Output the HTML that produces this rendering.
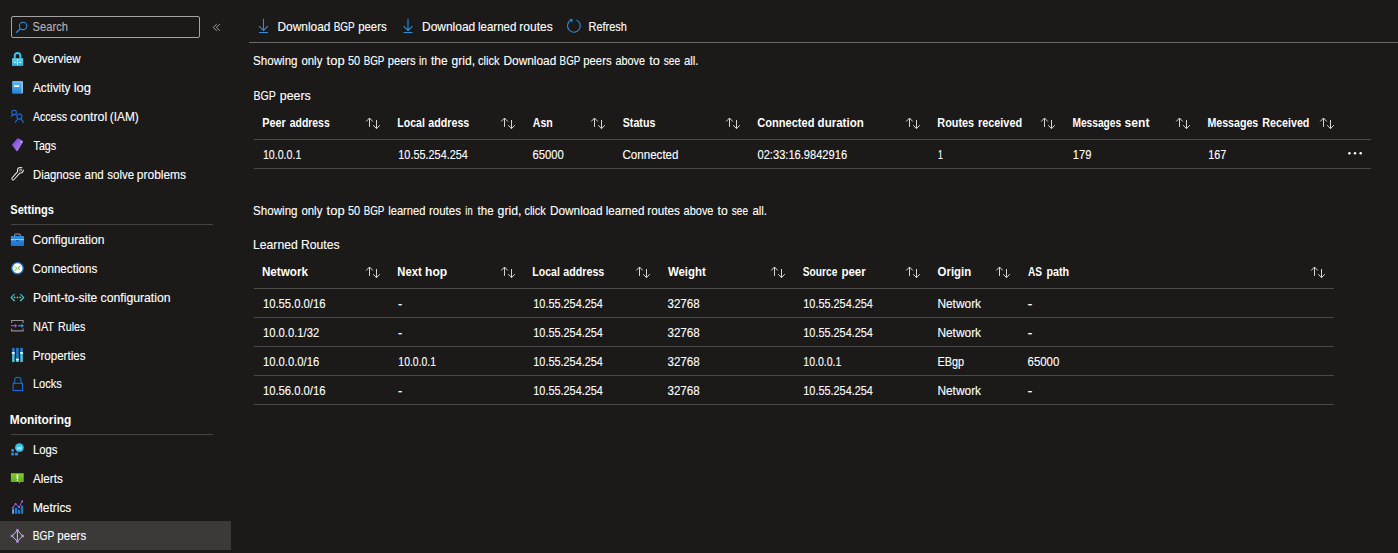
<!DOCTYPE html>
<html lang="en"><head><meta charset="utf-8"><title>BGP peers</title>
<style>
*{box-sizing:border-box;margin:0;padding:0}
html,body{width:1398px;height:553px;overflow:hidden;background:#1b1a19}
body{position:relative;font-family:"Liberation Sans",sans-serif;font-size:13px;color:#fff}
.t{position:absolute;white-space:nowrap;-webkit-text-stroke:0.12px currentColor;line-height:16px;height:16px;margin-top:1px;transform-origin:0 50%}
.b{font-weight:bold;-webkit-text-stroke:0}
.ln{position:absolute;height:1px}
.sel{position:absolute;left:0;top:521px;width:231px;height:29px;background:#3b3a39}
.search{position:absolute;left:11px;top:16px;width:189px;height:22px;border:1px solid #a6a4a2;border-radius:2px;background:#1b1a19}
.w,.g{position:static;display:contents}
.ov{position:absolute;left:0;top:0;width:1398px;height:553px;pointer-events:none}
</style></head><body>

<nav class="w" aria-label="Resource menu">
<div class="sel"></div>
<div class="search"></div>
<span class="t" id="s_search" style="left:32px;top:18px;color:#b3b1af;transform:translateX(0.62px) scaleX(0.8587)">Search</span>
<span class="t" id="s0" style="left:32px;top:50px;transform:translateX(0.91px) scaleX(0.881)">Overview</span>
<span class="g" id="s1"><span class="t" id="s1w0" style="left:32px;top:79px;transform:translateX(0.95px) scaleX(0.9079)">Activity</span> <span class="t" id="s1w1" style="left:73px;top:79px;transform:translateX(0.7px) scaleX(1.0)">log</span></span>
<span class="g" id="s2"><span class="t" id="s2w0" style="left:32px;top:108px;transform:translateX(0.95px) scaleX(0.8133)">Access</span> <span class="t" id="s2w1" style="left:70px;top:108px;transform:translateX(0.07px) scaleX(0.9524)">control</span> <span class="t" id="s2w2" style="left:109px;top:108px;transform:translateX(0.81px) scaleX(0.9125)">(IAM)</span></span>
<span class="t" id="s3" style="left:33px;top:137px;transform:translateX(0.59px) scaleX(0.8208)">Tags</span>
<span class="g" id="s4"><span class="t" id="s4w0" style="left:32px;top:166px;transform:translateX(0.98px) scaleX(0.8711)">Diagnose</span> <span class="t" id="s4w1" style="left:84px;top:166px;transform:translateX(0.5px) scaleX(0.8854)">and</span> <span class="t" id="s4w2" style="left:107px;top:166px;transform:translateX(0.33px) scaleX(0.8824)">solve</span> <span class="t" id="s4w3" style="left:136px;top:166px;transform:translateX(0.86px) scaleX(0.9196)">problems</span></span>
<span class="t" id="s5" style="left:32px;top:231px;transform:translateX(0.54px) scaleX(0.9305)">Configuration</span>
<span class="t" id="s6" style="left:32px;top:260px;transform:translateX(0.55px) scaleX(0.8951)">Connections</span>
<span class="g" id="s7"><span class="t" id="s7w0" style="left:32px;top:289px;transform:translateX(0.92px) scaleX(0.9287)">Point-to-site</span> <span class="t" id="s7w1" style="left:100px;top:289px;transform:translateX(0.53px) scaleX(0.9412)">configuration</span></span>
<span class="g" id="s8"><span class="t" id="s8w0" style="left:33px;top:318px;transform:translateX(0.01px) scaleX(0.8396)">NAT</span> <span class="t" id="s8w1" style="left:57px;top:318px;transform:translateX(0.97px) scaleX(0.822)">Rules</span></span>
<span class="t" id="s9" style="left:32px;top:347px;transform:translateX(0.66px) scaleX(0.8922)">Properties</span>
<span class="t" id="s10" style="left:32px;top:375px;transform:translateX(0.94px) scaleX(0.8523)">Locks</span>
<span class="t" id="s11" style="left:32px;top:441px;transform:translateX(0.92px) scaleX(0.8711)">Logs</span>
<span class="t" id="s12" style="left:33px;top:470px;transform:translateX(0.0px) scaleX(0.8939)">Alerts</span>
<span class="t" id="s13" style="left:32px;top:499px;transform:translateX(0.88px) scaleX(0.9173)">Metrics</span>
<span class="g" id="s14"><span class="t" id="s14w0" style="left:32px;top:527px;transform:translateX(0.72px) scaleX(0.7846)">BGP</span> <span class="t" id="s14w1" style="left:57px;top:527px;transform:translateX(0.34px) scaleX(0.8857)">peers</span></span>
<span class="t b" id="h_settings" style="left:10px;top:201px;transform:translateX(0.34px) scaleX(0.8505)">Settings</span>
<div class="ln" style="left:11px;top:224px;width:202px;background:#464442"></div>
<span class="t b" id="h_mon" style="left:9px;top:411px;transform:translateX(0.86px) scaleX(0.9153)">Monitoring</span>
<div class="ln" style="left:11px;top:434px;width:202px;background:#464442"></div>
</nav>
<main class="w">
<div class="w" role="toolbar">
<span class="g" id="tb1"><span class="t" id="tb1w0" style="left:277px;top:18px;transform:translateX(0.53px) scaleX(0.9152)">Download</span> <span class="t" id="tb1w1" style="left:333px;top:18px;transform:translateX(0.67px) scaleX(0.7674)">BGP</span> <span class="t" id="tb1w2" style="left:358px;top:18px;transform:translateX(0.25px) scaleX(0.873)">peers</span></span>
<span class="g" id="tb2"><span class="t" id="tb2w0" style="left:422px;top:18px;transform:translateX(0.03px) scaleX(0.9205)">Download</span> <span class="t" id="tb2w1" style="left:477px;top:18px;transform:translateX(0.94px) scaleX(0.887)">learned</span> <span class="t" id="tb2w2" style="left:519px;top:18px;transform:translateX(0.35px) scaleX(0.9258)">routes</span></span>
<span class="t" id="tb3" style="left:588px;top:18px;transform:translateX(0.51px) scaleX(0.8424)">Refresh</span>
</div>
<div class="ln" style="left:249px;top:42px;width:1149px;background:#6e6c6a"></div>
<span class="g" id="p1"><span class="t" id="p1w0" style="left:253px;top:52px;transform:translateX(0.11px) scaleX(0.8902)">Showing</span> <span class="t" id="p1w1" style="left:301px;top:52px;transform:translateX(0.46px) scaleX(0.8745)">only</span> <span class="t" id="p1w2" style="left:326px;top:52px;transform:translateX(0.6px) scaleX(0.9972)">top</span> <span class="t" id="p1w3" style="left:347px;top:52px;transform:translateX(0.93px) scaleX(0.8414)">50</span> <span class="t" id="p1w4" style="left:363px;top:52px;transform:translateX(0.65px) scaleX(0.7558)">BGP</span> <span class="t" id="p1w5" style="left:387px;top:52px;transform:translateX(0.7px) scaleX(0.8604)">peers</span> <span class="t" id="p1w6" style="left:418px;top:52px;transform:translateX(0.91px) scaleX(0.7946)">in</span> <span class="t" id="p1w7" style="left:431px;top:52px;transform:translateX(0.0px) scaleX(0.9258)">the</span> <span class="t" id="p1w8" style="left:451px;top:52px;transform:translateX(0.53px) scaleX(0.9284)">grid,</span> <span class="t" id="p1w9" style="left:477px;top:52px;transform:translateX(0.92px) scaleX(0.8567)">click</span> <span class="t" id="p1w10" style="left:503px;top:52px;transform:translateX(0.43px) scaleX(0.9144)">Download</span> <span class="t" id="p1w11" style="left:559px;top:52px;transform:translateX(0.59px) scaleX(0.754)">BGP</span> <span class="t" id="p1w12" style="left:583px;top:52px;transform:translateX(0.29px) scaleX(0.87)">peers</span> <span class="t" id="p1w13" style="left:615px;top:52px;transform:translateX(0.38px) scaleX(0.8349)">above</span> <span class="t" id="p1w14" style="left:649px;top:52px;transform:translateX(0.15px) scaleX(0.9721)">to</span> <span class="t" id="p1w15" style="left:663px;top:52px;transform:translateX(0.7px) scaleX(0.7779)">see</span> <span class="t" id="p1w16" style="left:683px;top:52px;transform:translateX(0.9px) scaleX(0.8801)">all.</span></span>
<span class="g" id="p2"><span class="t" id="p2w0" style="left:253px;top:87px;transform:translateX(0.49px) scaleX(0.8135)">BGP</span> <span class="t" id="p2w1" style="left:279px;top:87px;transform:translateX(0.74px) scaleX(0.9524)">peers</span></span>
<span class="g" id="t1h0"><span class="t b" id="t1h0w0" style="left:262px;top:114px;transform:translateX(0.33px) scaleX(0.8312)">Peer</span> <span class="t b" id="t1h0w1" style="left:289px;top:114px;transform:translateX(0.75px) scaleX(0.8011)">address</span></span>
<span class="g" id="t1h1"><span class="t b" id="t1h1w0" style="left:397px;top:114px;transform:translateX(0.34px) scaleX(0.8109)">Local</span> <span class="t b" id="t1h1w1" style="left:428px;top:114px;transform:translateX(0.34px) scaleX(0.8213)">address</span></span>
<span class="t b" id="t1h2" style="left:532px;top:114px;transform:translateX(0.85px) scaleX(0.8129)">Asn</span>
<span class="t b" id="t1h3" style="left:622px;top:114px;transform:translateX(0.74px) scaleX(0.8205)">Status</span>
<span class="g" id="t1h4"><span class="t b" id="t1h4w0" style="left:757px;top:114px;transform:translateX(0.13px) scaleX(0.853)">Connected</span> <span class="t b" id="t1h4w1" style="left:817px;top:114px;transform:translateX(0.61px) scaleX(0.8878)">duration</span></span>
<span class="g" id="t1h5"><span class="t b" id="t1h5w0" style="left:937px;top:114px;transform:translateX(0.32px) scaleX(0.8363)">Routes</span> <span class="t b" id="t1h5w1" style="left:977px;top:114px;transform:translateX(0.98px) scaleX(0.8361)">received</span></span>
<span class="g" id="t1h6"><span class="t b" id="t1h6w0" style="left:1072px;top:114px;transform:translateX(0.41px) scaleX(0.7852)">Messages</span> <span class="t b" id="t1h6w1" style="left:1124px;top:114px;transform:translateX(0.58px) scaleX(0.9309)">sent</span></span>
<span class="g" id="t1h7"><span class="t b" id="t1h7w0" style="left:1207px;top:114px;transform:translateX(0.39px) scaleX(0.818)">Messages</span> <span class="t b" id="t1h7w1" style="left:1262px;top:114px;transform:translateX(0.33px) scaleX(0.8243)">Received</span></span>
<div class="ln" style="left:254px;top:139px;width:1117px;background:#4e4c4a"></div>
<span class="t" id="t1r0" style="left:262px;top:146px;transform:translateX(0.94px) scaleX(0.8164)">10.0.0.1</span>
<span class="t" id="t1r1" style="left:398px;top:146px;transform:translateX(0.32px) scaleX(0.8366)">10.55.254.254</span>
<span class="t" id="t1r2" style="left:532px;top:146px;transform:translateX(0.62px) scaleX(0.8639)">65000</span>
<span class="t" id="t1r3" style="left:622px;top:146px;transform:translateX(0.51px) scaleX(0.8899)">Connected</span>
<span class="t" id="t1r4" style="left:757px;top:146px;transform:translateX(0.52px) scaleX(0.8543)">02:33:16.9842916</span>
<span class="t" id="t1r5" style="left:938px;top:146px;transform:translateX(0.0px) scaleX(0.6667)">1</span>
<span class="t" id="t1r6" style="left:1072px;top:146px;transform:translateX(0.86px) scaleX(0.8537)">179</span>
<span class="t" id="t1r7" style="left:1208px;top:146px;transform:translateX(0.33px) scaleX(0.8317)">167</span>
<div class="ln" style="left:254px;top:168px;width:1117px;background:#4a4846"></div>
<span class="g" id="p3"><span class="t" id="p3w0" style="left:253px;top:202px;transform:translateX(0.11px) scaleX(0.8902)">Showing</span> <span class="t" id="p3w1" style="left:301px;top:202px;transform:translateX(0.46px) scaleX(0.8745)">only</span> <span class="t" id="p3w2" style="left:326px;top:202px;transform:translateX(0.6px) scaleX(0.9972)">top</span> <span class="t" id="p3w3" style="left:347px;top:202px;transform:translateX(0.93px) scaleX(0.8414)">50</span> <span class="t" id="p3w4" style="left:363px;top:202px;transform:translateX(0.65px) scaleX(0.7558)">BGP</span> <span class="t" id="p3w5" style="left:388px;top:202px;transform:translateX(0.21px) scaleX(0.8571)">learned</span> <span class="t" id="p3w6" style="left:428px;top:202px;transform:translateX(0.94px) scaleX(0.8844)">routes</span> <span class="t" id="p3w7" style="left:465px;top:202px;transform:translateX(0.31px) scaleX(0.7154)">in</span> <span class="t" id="p3w8" style="left:477px;top:202px;transform:translateX(0.6px) scaleX(0.8886)">the</span> <span class="t" id="p3w9" style="left:497px;top:202px;transform:translateX(0.58px) scaleX(0.9411)">grid,</span> <span class="t" id="p3w10" style="left:524px;top:202px;transform:translateX(0.42px) scaleX(0.8447)">click</span> <span class="t" id="p3w11" style="left:550px;top:202px;transform:translateX(0.04px) scaleX(0.9063)">Download</span> <span class="t" id="p3w12" style="left:605px;top:202px;transform:translateX(0.73px) scaleX(0.8905)">learned</span> <span class="t" id="p3w13" style="left:647px;top:202px;transform:translateX(0.33px) scaleX(0.9)">routes</span> <span class="t" id="p3w14" style="left:683px;top:202px;transform:translateX(0.58px) scaleX(0.8436)">above</span> <span class="t" id="p3w15" style="left:717px;top:202px;transform:translateX(0.54px) scaleX(0.9343)">to</span> <span class="t" id="p3w16" style="left:731px;top:202px;transform:translateX(0.86px) scaleX(0.7706)">see</span> <span class="t" id="p3w17" style="left:752px;top:202px;transform:translateX(0.41px) scaleX(0.8769)">all.</span></span>
<span class="g" id="p4"><span class="t" id="p4w0" style="left:253px;top:236px;transform:translateX(0.01px) scaleX(0.9381)">Learned</span> <span class="t" id="p4w1" style="left:301px;top:236px;transform:translateX(0.02px) scaleX(0.9372)">Routes</span></span>
<span class="t b" id="t2h0" style="left:261px;top:263px;transform:translateX(0.93px) scaleX(0.898)">Network</span>
<span class="g" id="t2h1"><span class="t b" id="t2h1w0" style="left:397px;top:263px;transform:translateX(0.3px) scaleX(0.8643)">Next</span> <span class="t b" id="t2h1w1" style="left:425px;top:263px;transform:translateX(0.01px) scaleX(0.9288)">hop</span></span>
<span class="g" id="t2h2"><span class="t b" id="t2h2w0" style="left:532px;top:263px;transform:translateX(0.34px) scaleX(0.8109)">Local</span> <span class="t b" id="t2h2w1" style="left:563px;top:263px;transform:translateX(0.34px) scaleX(0.8213)">address</span></span>
<span class="t b" id="t2h3" style="left:667px;top:263px;transform:translateX(0.9px) scaleX(0.8779)">Weight</span>
<span class="g" id="t2h4"><span class="t b" id="t2h4w0" style="left:802px;top:263px;transform:translateX(0.8px) scaleX(0.7828)">Source</span> <span class="t b" id="t2h4w1" style="left:841px;top:263px;transform:translateX(0.38px) scaleX(0.8849)">peer</span></span>
<span class="t b" id="t2h5" style="left:937px;top:263px;transform:translateX(0.61px) scaleX(0.8771)">Origin</span>
<span class="g" id="t2h6"><span class="t b" id="t2h6w0" style="left:1027px;top:263px;transform:translateX(0.96px) scaleX(0.7797)">AS</span> <span class="t b" id="t2h6w1" style="left:1046px;top:263px;transform:translateX(0.38px) scaleX(0.8251)">path</span></span>
<div class="ln" style="left:254px;top:288px;width:1080px;background:#4e4c4a"></div>
<span class="t" id="t2r0c0" style="left:262px;top:295px;transform:translateX(0.9px) scaleX(0.8662)">10.55.0.0/16</span>
<span class="t" id="t2r0c1" style="left:398px;top:295px;transform:translateX(0.07px) scaleX(0.9602)">-</span>
<span class="t" id="t2r0c2" style="left:533px;top:295px;transform:translateX(0.32px) scaleX(0.8366)">10.55.254.254</span>
<span class="t" id="t2r0c3" style="left:667px;top:295px;transform:translateX(0.45px) scaleX(0.8923)">32768</span>
<span class="t" id="t2r0c4" style="left:803px;top:295px;transform:translateX(0.32px) scaleX(0.8366)">10.55.254.254</span>
<span class="t" id="t2r0c5" style="left:937px;top:295px;transform:translateX(0.38px) scaleX(0.9166)">Network</span>
<span class="t" id="t2r0c6" style="left:1027px;top:295px;transform:translateX(0.44px) scaleX(1.1149)">-</span>
<div class="ln" style="left:254px;top:317px;width:1080px;background:#4a4846"></div>
<span class="t" id="t2r1c0" style="left:262px;top:324px;transform:translateX(0.9px) scaleX(0.8643)">10.0.0.1/32</span>
<span class="t" id="t2r1c1" style="left:398px;top:324px;transform:translateX(0.07px) scaleX(0.9602)">-</span>
<span class="t" id="t2r1c2" style="left:533px;top:324px;transform:translateX(0.32px) scaleX(0.8366)">10.55.254.254</span>
<span class="t" id="t2r1c3" style="left:667px;top:324px;transform:translateX(0.45px) scaleX(0.8923)">32768</span>
<span class="t" id="t2r1c4" style="left:803px;top:324px;transform:translateX(0.32px) scaleX(0.8366)">10.55.254.254</span>
<span class="t" id="t2r1c5" style="left:937px;top:324px;transform:translateX(0.38px) scaleX(0.9166)">Network</span>
<span class="t" id="t2r1c6" style="left:1027px;top:324px;transform:translateX(0.44px) scaleX(1.1149)">-</span>
<div class="ln" style="left:254px;top:346px;width:1080px;background:#4a4846"></div>
<span class="t" id="t2r2c0" style="left:262px;top:353px;transform:translateX(0.9px) scaleX(0.8643)">10.0.0.0/16</span>
<span class="t" id="t2r2c1" style="left:398px;top:353px;transform:translateX(0.36px) scaleX(0.8023)">10.0.0.1</span>
<span class="t" id="t2r2c2" style="left:533px;top:353px;transform:translateX(0.32px) scaleX(0.8366)">10.55.254.254</span>
<span class="t" id="t2r2c3" style="left:667px;top:353px;transform:translateX(0.45px) scaleX(0.8923)">32768</span>
<span class="t" id="t2r2c4" style="left:803px;top:353px;transform:translateX(0.34px) scaleX(0.8098)">10.0.0.1</span>
<span class="t" id="t2r2c5" style="left:937px;top:353px;transform:translateX(0.46px) scaleX(0.8398)">EBgp</span>
<span class="t" id="t2r2c6" style="left:1027px;top:353px;transform:translateX(0.56px) scaleX(0.8781)">65000</span>
<div class="ln" style="left:254px;top:375px;width:1080px;background:#4a4846"></div>
<span class="t" id="t2r3c0" style="left:262px;top:382px;transform:translateX(0.9px) scaleX(0.8662)">10.56.0.0/16</span>
<span class="t" id="t2r3c1" style="left:398px;top:382px;transform:translateX(0.07px) scaleX(0.9602)">-</span>
<span class="t" id="t2r3c2" style="left:533px;top:382px;transform:translateX(0.32px) scaleX(0.8366)">10.55.254.254</span>
<span class="t" id="t2r3c3" style="left:667px;top:382px;transform:translateX(0.45px) scaleX(0.8923)">32768</span>
<span class="t" id="t2r3c4" style="left:803px;top:382px;transform:translateX(0.32px) scaleX(0.8366)">10.55.254.254</span>
<span class="t" id="t2r3c5" style="left:937px;top:382px;transform:translateX(0.38px) scaleX(0.9166)">Network</span>
<span class="t" id="t2r3c6" style="left:1027px;top:382px;transform:translateX(0.44px) scaleX(1.1149)">-</span>
<div class="ln" style="left:254px;top:404px;width:1080px;background:#4a4846"></div>
</main>
<svg class="ov" viewBox="0 0 1398 553">
<defs>
<linearGradient id="gLock" x1="0" y1="0" x2="0" y2="1"><stop offset="0" stop-color="#5fd6f5"/><stop offset="1" stop-color="#1fb0e0"/></linearGradient>
<linearGradient id="gBook" x1="0" y1="0" x2="0" y2="1"><stop offset="0" stop-color="#62bbf6"/><stop offset="1" stop-color="#1f80d8"/></linearGradient>
<linearGradient id="gTag" x1="0" y1="0" x2="1" y2="1"><stop offset="0" stop-color="#7338d6"/><stop offset="1" stop-color="#b891ec"/></linearGradient>
<linearGradient id="gCase" x1="0" y1="0" x2="0" y2="1"><stop offset="0" stop-color="#2f8fe8"/><stop offset="1" stop-color="#1a74d0"/></linearGradient>
<linearGradient id="gAlert" x1="0" y1="0" x2="0" y2="1"><stop offset="0" stop-color="#82cc30"/><stop offset="1" stop-color="#5fa818"/></linearGradient>
<linearGradient id="gChev" x1="0" y1="0" x2="0" y2="1"><stop offset="0" stop-color="#1fa8e8"/><stop offset="1" stop-color="#5fd8f8"/></linearGradient>
</defs>
<circle cx="23.1" cy="25.9" r="3.7" fill="none" stroke="#2b8fe0" stroke-width="1.1"/><path d="M20.4 28.7L16.1 32.8" stroke="#2b8fe0" stroke-width="1.2" fill="none"/>
<path d="M216.8 24.1L213.2 27.45L216.8 30.8M219.9 24.1L216.3 27.45L219.9 30.8" fill="none" stroke="#a8a6a4" stroke-width="0.9"/>
<path d="M263.5 18.8V30.3M259.1 26.2L263.5 30.5L267.9 26.2M259.0 32.5H268.0" fill="none" stroke="#2b8fe0" stroke-width="1.1"/>
<path d="M408.0 18.8V30.3M403.6 26.2L408.0 30.5L412.4 26.2M403.5 32.5H412.5" fill="none" stroke="#2b8fe0" stroke-width="1.1"/>
<path d="M576.30 19.87A6.4 6.4 0 1 1 570.90 20.15" fill="none" stroke="#2b8fe0" stroke-width="1.05"/>
<path d="M569.3 19.4L572.3 19.2L572.1 22.2Z" fill="#2b8fe0" stroke="#2b8fe0" stroke-width="0.4" stroke-linejoin="round"/>
<circle cx="1349.4" cy="153.2" r="1.25" fill="#fff"/>
<circle cx="1355.0" cy="153.2" r="1.25" fill="#fff"/>
<circle cx="1360.7" cy="153.2" r="1.25" fill="#fff"/>
<path d="M14.75 58.6V55.7a2.8 2.8 0 0 1 5.6 0v2.9" fill="none" stroke="#35c6f2" stroke-width="2.0"/>
<rect x="12" y="58.2" width="11.2" height="7.8" rx="0.6" fill="url(#gLock)"/>
<path d="M17.5 59.6V61.3M17.5 63.3V65.0M13.9 62.4H16.2M18.9 62.4H21.2" stroke="#f2fdff" stroke-width="0.95" fill="none"/><circle cx="17.5" cy="62.4" r="0.55" fill="#c8f3fd"/>
<rect x="12.1" y="81.1" width="10.6" height="12.6" rx="1" fill="url(#gBook)"/>
<rect x="21.6" y="81.6" width="1.1" height="11.6" fill="#a8dcfb"/>
<rect x="14.1" y="85.3" width="5.1" height="1.7" fill="#fff"/>
<circle cx="14.1" cy="112.5" r="2.3" fill="none" stroke="#1a6fe0" stroke-width="1.05"/>
<circle cx="19.4" cy="116.5" r="2.6" fill="none" stroke="#1a6fe0" stroke-width="1.05"/>
<path d="M10.9 116.8Q11.8 115 13.4 114.9M15.2 122.8Q16.2 120 18 119.2M20.9 119.2Q22.8 120.2 23.6 122.8" fill="none" stroke="#1a6fe0" stroke-width="1.05"/>
<path d="M18.2 138.3L22.6 140.8Q23.2 141.3 22.9 142.3L17.6 150.9Q17.2 151.4 16.6 150.9L12.1 145.3Q11.7 144.7 12.2 144.2L17.4 138.5Q17.8 138.1 18.2 138.3Z" fill="url(#gTag)"/>
<circle cx="21.3" cy="141.9" r="0.7" fill="#e9dcfb"/>
<path d="M13.1 178.7L19.0 172.0" stroke="#f3f2f1" stroke-width="3.5" stroke-linecap="round" fill="none"/>
<circle cx="20.4" cy="170.3" r="3.3" fill="#f3f2f1"/>
<path d="M13.1 178.7L19.0 172.0" stroke="#1b1a19" stroke-width="1.7" stroke-linecap="round" fill="none"/>
<circle cx="20.4" cy="170.3" r="2.35" fill="#1b1a19"/>
<path d="M20.4 170.3L24.5 165.2L26 169Z" fill="#1b1a19"/>
<circle cx="20.6" cy="170.1" r="1.0" fill="none" stroke="#f3f2f1" stroke-width="0.7"/>
<path d="M14.6 236.4V234.7Q14.6 234.1 15.2 234.1H19.7Q20.3 234.1 20.3 234.7V236.4" fill="none" stroke="#a6a6a6" stroke-width="1"/>
<rect x="10.9" y="236.1" width="13.15" height="9.95" rx="0.7" fill="url(#gCase)"/>
<rect x="10.9" y="239.0" width="13.15" height="1.2" fill="#7fd2f8"/>
<rect x="16.0" y="240.2" width="3.0" height="1.1" fill="#0f4f9a"/>
<circle cx="17.5" cy="268.25" r="5.7" fill="#fff" stroke="#1570c8" stroke-width="1.3"/>
<path d="M14.6 270.9L16.7 268.6L15.4 266.6M20.4 265.6L18.3 267.9L19.6 269.9" fill="none" stroke="#5fb020" stroke-width="0.9"/>
<path d="M14.6 293.9L11.2 297.5L14.6 301.1M20.2 293.9L23.7 297.5L20.2 301.1" fill="none" stroke="url(#gChev)" stroke-width="1.15"/>
<circle cx="14.70" cy="297.4" r="0.85" fill="#86d633"/>
<circle cx="17.45" cy="297.4" r="0.85" fill="#86d633"/>
<circle cx="20.20" cy="297.4" r="0.85" fill="#86d633"/>
<path d="M11.6 323.0V320.5H23.1V323.0M11.6 328.5V330.9H23.1V328.5" fill="none" stroke="#8f8d8b" stroke-width="1.1"/>
<path d="M10.9 325.7H15.6" stroke="#9b4ff0" stroke-width="1.2" fill="none"/><path d="M14.9 323.5L17.1 325.7L14.9 327.9Z" fill="#9b4ff0"/>
<path d="M18.0 325.7H22.2" stroke="#2f9ff0" stroke-width="1.2" fill="none"/><path d="M21.5 323.5L23.8 325.7L21.5 327.9Z" fill="#2f9ff0"/>
<rect x="12.10" y="347.9" width="2.5" height="4.20" fill="#1f7fd8"/>
<rect x="12.10" y="352.10" width="2.5" height="9.95" fill="#3fc8f0"/>
<rect x="11.80" y="352.10" width="3.1" height="1.7" fill="#dff4fc"/>
<rect x="16.15" y="347.9" width="2.5" height="10.80" fill="#1f7fd8"/>
<rect x="16.15" y="358.70" width="2.5" height="3.35" fill="#3fc8f0"/>
<rect x="15.85" y="358.70" width="3.1" height="1.7" fill="#dff4fc"/>
<rect x="20.30" y="347.9" width="2.5" height="4.20" fill="#1f7fd8"/>
<rect x="20.30" y="352.10" width="2.5" height="9.95" fill="#3fc8f0"/>
<rect x="20.00" y="352.10" width="3.1" height="1.7" fill="#dff4fc"/>
<path d="M14.6 383.2V380.5a3.2 3.2 0 0 1 6.4 0V383.2" fill="none" stroke="#1a6fe0" stroke-width="1.05"/>
<rect x="13.1" y="383.3" width="9.4" height="7.2" fill="none" stroke="#1a6fe0" stroke-width="1.05"/>
<circle cx="19.4" cy="447.6" r="4.4" fill="#32bee0"/>
<path d="M16.8 449.6V446.4L18.3 447.8L19.6 446.0L20.8 447.4L22.0 445.6V449.6Z" fill="#9fe4f5"/>
<rect x="11.3" y="449.0" width="2.6" height="2.7" fill="#2f8fe8"/><rect x="11.3" y="452.7" width="2.6" height="2.7" fill="#2f8fe8"/><rect x="14.9" y="452.7" width="3.1" height="2.7" fill="#2f8fe8"/>
<path d="M10.9 473.3H23.75V482.1H20.2L19.4 483.5L18.2 482.1H10.9Z" fill="url(#gAlert)"/>
<rect x="16.7" y="474.3" width="1.4" height="4.7" fill="#fff"/><rect x="16.7" y="479.7" width="1.4" height="1.3" fill="#fff"/>
<rect x="12.1" y="509.2" width="2.0" height="4.55" fill="#5fa8f0"/><rect x="14.9" y="507.7" width="2.3" height="6.05" fill="#1f78d0"/><rect x="18.0" y="509.7" width="2.2" height="4.05" fill="#1f78d0"/><rect x="21.0" y="505.6" width="2.2" height="8.15" fill="#1f78d0"/>
<path d="M12.9 507.7L15.6 503.9L19.2 507.2L22.2 501.3" fill="none" stroke="#a060f0" stroke-width="1.0"/>
<circle cx="12.9" cy="507.7" r="0.95" fill="#a868f5"/>
<circle cx="15.6" cy="503.9" r="0.95" fill="#a868f5"/>
<circle cx="19.2" cy="507.2" r="0.95" fill="#a868f5"/>
<circle cx="22.2" cy="501.3" r="0.95" fill="#a868f5"/>
<path d="M17.4 530.25L22.7 536L17.4 541.4L12.1 536ZM17.4 530.25V541.4" fill="none" stroke="#d8d6d4" stroke-width="0.9"/>
<rect x="16.10" y="528.95" width="2.6" height="2.6" rx="0.8" fill="#b58af5"/>
<rect x="21.40" y="534.70" width="2.6" height="2.6" rx="0.8" fill="#b58af5"/>
<rect x="16.10" y="540.10" width="2.6" height="2.6" rx="0.8" fill="#b58af5"/>
<rect x="10.80" y="534.70" width="2.6" height="2.6" rx="0.8" fill="#b58af5"/>
<path d="M369.5 118.00V126.90M366.20 121.50L369.5 118.00L372.80 121.50M376.5 120.00V128.70M373.20 125.20L376.5 128.70L379.80 125.20" fill="none" stroke="#d6d6d6" stroke-width="1"/>
<path d="M504.5 118.00V126.90M501.20 121.50L504.5 118.00L507.80 121.50M511.5 120.00V128.70M508.20 125.20L511.5 128.70L514.80 125.20" fill="none" stroke="#d6d6d6" stroke-width="1"/>
<path d="M594.5 118.00V126.90M591.20 121.50L594.5 118.00L597.80 121.50M601.5 120.00V128.70M598.20 125.20L601.5 128.70L604.80 125.20" fill="none" stroke="#d6d6d6" stroke-width="1"/>
<path d="M729.5 118.00V126.90M726.20 121.50L729.5 118.00L732.80 121.50M736.5 120.00V128.70M733.20 125.20L736.5 128.70L739.80 125.20" fill="none" stroke="#d6d6d6" stroke-width="1"/>
<path d="M909.5 118.00V126.90M906.20 121.50L909.5 118.00L912.80 121.50M916.5 120.00V128.70M913.20 125.20L916.5 128.70L919.80 125.20" fill="none" stroke="#d6d6d6" stroke-width="1"/>
<path d="M1044.5 118.00V126.90M1041.20 121.50L1044.5 118.00L1047.80 121.50M1051.5 120.00V128.70M1048.20 125.20L1051.5 128.70L1054.80 125.20" fill="none" stroke="#d6d6d6" stroke-width="1"/>
<path d="M1179.5 118.00V126.90M1176.20 121.50L1179.5 118.00L1182.80 121.50M1186.5 120.00V128.70M1183.20 125.20L1186.5 128.70L1189.80 125.20" fill="none" stroke="#d6d6d6" stroke-width="1"/>
<path d="M1323.5 118.00V126.90M1320.20 121.50L1323.5 118.00L1326.80 121.50M1330.5 120.00V128.70M1327.20 125.20L1330.5 128.70L1333.80 125.20" fill="none" stroke="#d6d6d6" stroke-width="1"/>
<path d="M369.5 267.00V275.90M366.20 270.50L369.5 267.00L372.80 270.50M376.5 269.00V277.70M373.20 274.20L376.5 277.70L379.80 274.20" fill="none" stroke="#d6d6d6" stroke-width="1"/>
<path d="M504.5 267.00V275.90M501.20 270.50L504.5 267.00L507.80 270.50M511.5 269.00V277.70M508.20 274.20L511.5 277.70L514.80 274.20" fill="none" stroke="#d6d6d6" stroke-width="1"/>
<path d="M639.5 267.00V275.90M636.20 270.50L639.5 267.00L642.80 270.50M646.5 269.00V277.70M643.20 274.20L646.5 277.70L649.80 274.20" fill="none" stroke="#d6d6d6" stroke-width="1"/>
<path d="M774.5 267.00V275.90M771.20 270.50L774.5 267.00L777.80 270.50M781.5 269.00V277.70M778.20 274.20L781.5 277.70L784.80 274.20" fill="none" stroke="#d6d6d6" stroke-width="1"/>
<path d="M909.5 267.00V275.90M906.20 270.50L909.5 267.00L912.80 270.50M916.5 269.00V277.70M913.20 274.20L916.5 277.70L919.80 274.20" fill="none" stroke="#d6d6d6" stroke-width="1"/>
<path d="M999.5 267.00V275.90M996.20 270.50L999.5 267.00L1002.80 270.50M1006.5 269.00V277.70M1003.20 274.20L1006.5 277.70L1009.80 274.20" fill="none" stroke="#d6d6d6" stroke-width="1"/>
<path d="M1314.5 267.00V275.90M1311.20 270.50L1314.5 267.00L1317.80 270.50M1321.5 269.00V277.70M1318.20 274.20L1321.5 277.70L1324.80 274.20" fill="none" stroke="#d6d6d6" stroke-width="1"/>
</svg>
</body></html>
